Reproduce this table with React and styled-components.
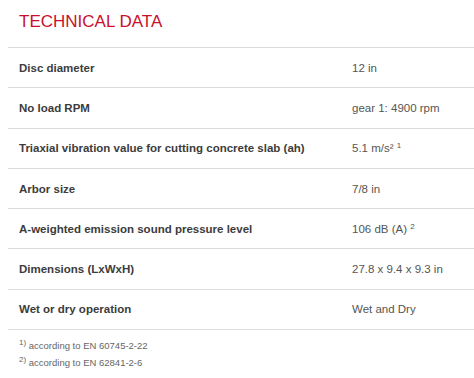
import React from "react";
import styled, { createGlobalStyle } from "styled-components";

const Global = createGlobalStyle`
  html, body { margin: 0; padding: 0; background: #fff; }
  body { font-family: "Liberation Sans", Arial, sans-serif; }
`;

const Page = styled.div`
  padding: 0 0 0 8px;
  width: 466px;
`;

const Title = styled.h2`
  margin: 0;
  padding: 11px 0 0 11px;
  height: 36px;
  font-size: 17px;
  font-weight: 400;
  line-height: 22px;
  color: #c8102e;
  box-sizing: content-box;
`;

const Table = styled.div`
  border-top: 1px solid #dcdcdc;
`;

const Row = styled.div`
  display: grid;
  grid-template-columns: 333px 1fr;
  align-items: center;
  height: 39.3px;
  border-bottom: 1px solid #dcdcdc;
`;

const Label = styled.div`
  padding-left: 11px;
  font-size: 11.5px;
  font-weight: 700;
  color: #3c3c3c;
  white-space: nowrap;
`;

const Value = styled.div`
  padding-left: 11px;
  font-size: 11.5px;
  color: #555;
  white-space: nowrap;
`;

const Sup = styled.sup`
  font-size: 8px;
  vertical-align: 4px;
  line-height: 0;
`;

const Notes = styled.div`
  padding: 10px 0 0 11px;
  display: flex;
  flex-direction: column;
  gap: 5px;
`;

const Note = styled.div`
  font-size: 9.5px;
  line-height: 12px;
  color: #666;
`;

const rows = [
  ["Disc diameter", "12 in"],
  ["No load RPM", "gear 1: 4900 rpm"],
  ["Triaxial vibration value for cutting concrete slab (ah)", <>5.1 m/s² <Sup>1</Sup></>],
  ["Arbor size", "7/8 in"],
  ["A-weighted emission sound pressure level", <>106 dB (A) <Sup>2</Sup></>],
  ["Dimensions (LxWxH)", "27.8 x 9.4 x 9.3 in"],
  ["Wet or dry operation", "Wet and Dry"],
];

export default function App() {
  return (
    <Page>
      <Global />
      <Title>TECHNICAL DATA</Title>
      <Table>
        {rows.map(([l, v], i) => (
          <Row key={i}>
            <Label>{l}</Label>
            <Value>{v}</Value>
          </Row>
        ))}
      </Table>
      <Notes>
        <Note><Sup>1)</Sup> according to EN 60745-2-22</Note>
        <Note><Sup>2)</Sup> according to EN 62841-2-6</Note>
      </Notes>
    </Page>
  );
}
